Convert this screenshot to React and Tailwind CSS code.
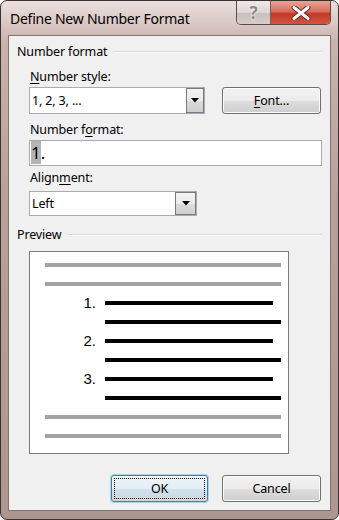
import React from "react";

const ui = { fontFamily: '"Noto Sans", "Open Sans", sans-serif' };

function U({ children }) {
  return <span className="underline underline-offset-2 decoration-1">{children}</span>;
}

function Arrow() {
  return (
    <svg width="8" height="5" viewBox="0 0 8 5">
      <polygon points="0,0 8,0 4,4.5" fill="#000" />
    </svg>
  );
}

function Combo({ w, h, text, btnW }) {
  return (
    <div className={`flex bg-white border border-[#a8abb2] ${w} ${h}`}>
      <div className="flex-1 flex items-center pl-[2px] text-black">{text}</div>
      <div
        className={`${btnW} border border-[#7a7a7a] bg-[linear-gradient(180deg,#f4f4f4_0%,#ebebeb_50%,#dcdcdc_51%,#cfcfcf_100%)] flex items-center justify-center`}
      >
        <Arrow />
      </div>
    </div>
  );
}

function Btn({ children, w, def }) {
  if (def) {
    return (
      <div
        className={`${w} h-[27px] rounded-[3px] border border-[#3c7fb1] bg-[linear-gradient(180deg,#eef5fa_0%,#e3edf4_50%,#d3e2ec_51%,#c6d9e6_100%)] shadow-[0_0_0_1px_#a9d4f0] p-[2px]`}
      >
        <div className="h-full w-full border border-dotted border-black flex items-center justify-center text-black">
          {children}
        </div>
      </div>
    );
  }
  return (
    <div
      className={`${w} h-[27px] rounded-[3px] border border-[#707070] bg-[linear-gradient(180deg,#f2f2f2_0%,#ebebeb_50%,#dddddd_51%,#cfcfcf_100%)] shadow-[inset_0_0_0_1px_#fcfcfc] flex items-center justify-center text-black`}
    >
      {children}
    </div>
  );
}

export default function App() {
  const lineRows = [
    { kind: "gray" },
    { kind: "gray" },
    { kind: "black", num: "1.", short: true },
    { kind: "black" },
    { kind: "black", num: "2.", short: true },
    { kind: "black" },
    { kind: "black", num: "3.", short: true },
    { kind: "black" },
    { kind: "gray" },
    { kind: "gray" },
  ];

  return (
    <div className="w-[339px] h-[520px] bg-white" style={ui}>
      <div className="w-[339px] h-[520px] rounded-[7px] border border-[#3d3230] bg-[linear-gradient(180deg,#eadfdc_0px,#dccbc7_20px,#c9b3ae_40px,#b8a19c_200px,#ad9590_520px)] flex flex-col">
        {/* title bar */}
        <div className="h-[34px] flex items-start shrink-0">
          <div className="pl-[9px] pt-[8px] text-[14px] tracking-[-0.25px] leading-[20px] text-black">
            Define New Number Format
          </div>
          <div className="ml-auto mr-[7px] flex h-[24px] border border-t-0 border-[#5b4a47] rounded-b-[5px] overflow-hidden">
            <div className="w-[34px] h-full bg-[linear-gradient(180deg,#efe9e8_0%,#ddd5d3_50%,#c8bebb_51%,#d6ceca_100%)] border-r border-[#6f5f5c] flex items-center justify-center">
              <span
                className="text-[17px] font-bold leading-none text-[#8a8a8a]"
                style={{ textShadow: "0 0 1px #fff, 0 0 2px #fff" }}
              >
                ?
              </span>
            </div>
            <div className="w-[59px] h-full bg-[linear-gradient(180deg,#e8a597_0%,#d8705f_45%,#c4392a_55%,#d2553f_100%)] flex items-center justify-center">
              <svg width="20" height="14" viewBox="0 0 20 14">
                <path d="M3 1.5 L17 12.5 M17 1.5 L3 12.5" stroke="#6d2a22" strokeWidth="5" strokeLinecap="round" />
                <path d="M3 1.5 L17 12.5 M17 1.5 L3 12.5" stroke="#fff" strokeWidth="3" strokeLinecap="round" />
              </svg>
            </div>
          </div>
        </div>

        {/* client area */}
        <div className="mx-[7px] h-[476px] border border-[#84716d] bg-[#f0f0f0] flex flex-col text-[12.5px] tracking-[-0.15px] leading-[18px] text-black">
          <div className="mt-[7px] pl-[8px] pr-[8px] flex items-center">
            <span>Number format</span>
            <div className="flex-1 ml-[6px] h-[2px] border-t border-[#d9d9d9] border-b-white border-b" />
          </div>

          <div className="mt-[7px] pl-[21px]">
            <U>N</U>umber style:
          </div>
          <div className="mt-[1px] pl-[20px] flex">
            <Combo w="w-[176px]" h="h-[27px]" text="1, 2, 3, ..." btnW="w-[18px]" />
            <div className="ml-[17px]">
              <Btn w="w-[99px]">
                <U>F</U>ont...
              </Btn>
            </div>
          </div>

          <div className="mt-[7px] pl-[21px]">
            Number f<U>o</U>rmat:
          </div>
          <div className="mt-[1px] pl-[20px]">
            <div className="w-[293px] h-[26px] bg-white border border-[#a8abb2] pt-[2px] pl-[1px] text-[17px] tracking-normal leading-[20px]">
              <span className="bg-[#b4b4b4]">1</span>.
            </div>
          </div>

          <div className="mt-[3px] pl-[21px]">
            Align<U>m</U>ent:
          </div>
          <div className="mt-[4px] pl-[20px]">
            <Combo w="w-[168px]" h="h-[25px]" text="Left" btnW="w-[21px]" />
          </div>

          <div className="mt-[10px] pl-[8px] pr-[8px] flex items-center">
            <span>Preview</span>
            <div className="flex-1 ml-[6px] h-[2px] border-t border-[#d9d9d9] border-b-white border-b" />
          </div>

          <div className="mt-[7px] ml-[20px] w-[260px] h-[203px] bg-white border border-[#7a7a7a] pt-[11px] pl-[15px] pr-[7px]">
            {lineRows.map((r, i) => (
              <div key={i} className="h-[19px] flex items-start">
                {r.kind === "gray" ? (
                  <div className="w-full h-[4px] bg-[#a3a3a3]" />
                ) : (
                  <>
                    <div
                      className="w-[51px] -mt-[6px] text-right text-[15px] tracking-normal leading-[15px] text-black"
                      style={{ fontFamily: '"Liberation Sans", Arial, sans-serif' }}
                    >
                      {r.num || ""}
                    </div>
                    <div className="ml-[9px] flex-1 flex">
                      <div className={`h-[4px] bg-black ${r.short ? "w-[168px]" : "w-full"}`} />
                    </div>
                  </>
                )}
              </div>
            ))}
          </div>

          <div className="mt-[21px] pr-[9px] flex justify-end gap-[14px]">
            <Btn w="w-[97px]" def>
              OK
            </Btn>
            <Btn w="w-[99px]">Cancel</Btn>
          </div>
        </div>
      </div>
    </div>
  );
}
